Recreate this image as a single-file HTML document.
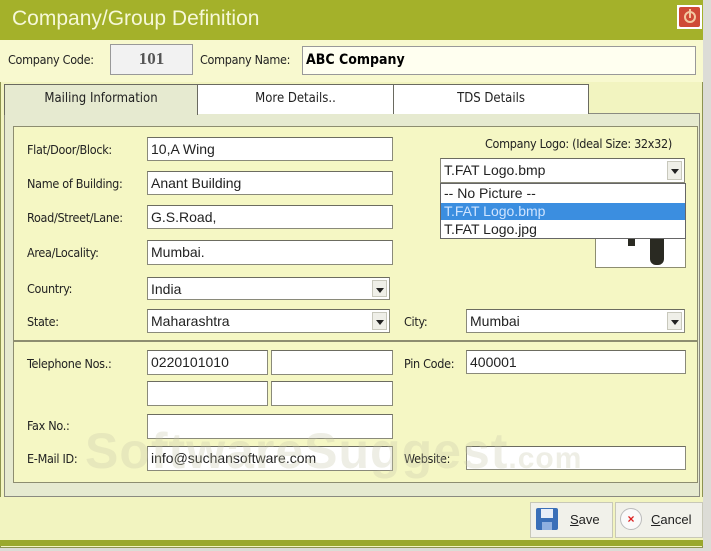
<!DOCTYPE html>
<html><head><meta charset="utf-8"><style>
*{box-sizing:border-box;margin:0;padding:0}
body{width:711px;height:551px;overflow:hidden;background:#dcdcd6;font-family:"Liberation Sans",sans-serif;position:relative}
.a{position:absolute}
.lbl{position:absolute;font-size:12.5px;color:#222;font-family:"DejaVu Sans Condensed","Liberation Sans",sans-serif;letter-spacing:-0.3px}
.in{position:absolute;background:#fff;border:1px solid #8a8a7a;border-top-color:#6c6c60;font-size:14px;color:#222;padding:3px 3px;font-family:"Liberation Sans",sans-serif;white-space:nowrap;overflow:hidden}
.cb .ar{position:absolute;right:2px;top:2px;width:15px;bottom:2px;background:#efefe8;border:1px solid #c8c8bc}
.cb .ar:after{content:"";position:absolute;left:3px;top:7px;border-left:4px solid transparent;border-right:4px solid transparent;border-top:5px solid #222}
.tab{position:absolute;top:84px;height:30px;border:1px solid #6a6a60;border-bottom:none;background:#fff;font-size:13px;text-align:center;line-height:28px;color:#222;font-family:"DejaVu Sans Condensed","Liberation Sans",sans-serif}
</style></head><body>
<div class="a" style="left:0;top:0;width:703px;height:548px;background:#f2f4c0;border:1px solid #8d9350"></div>
<div class="a" style="left:0;top:0;width:703px;height:40px;background:#a4b12a"></div>
<div class="a" style="left:12px;top:7px;font-size:21px;color:#f6f8d8">Company/Group Definition</div>
<div class="a" style="left:677px;top:5px;width:25px;height:24px;background:#fff"></div>
<div class="a" style="left:679px;top:7px;width:21px;height:20px;background:#cf4a36;border-radius:2px"></div>
<div class="a" style="left:684px;top:11px;width:12px;height:12px;border:2px solid #f3c8a0;border-radius:50%"></div>
<div class="a" style="left:689px;top:9px;width:2px;height:9px;background:#f3c8a0"></div>
<div class="a" style="left:0;top:40px;width:703px;height:42px;background:#f8f9cf"></div>
<div class="lbl" style="left:8px;top:52px">Company Code:</div>
<div class="a" style="left:110px;top:44px;width:83px;height:31px;background:#f2f2f2;border:1px solid #999;font-family:'Liberation Serif',serif;font-size:17px;font-weight:bold;color:#555;text-align:center;line-height:28px">101</div>
<div class="lbl" style="left:200px;top:52px">Company Name:</div>
<div class="a" style="left:302px;top:46px;width:394px;height:29px;background:#fffff0;border:1px solid #999;font-size:14px;font-weight:bold;padding:5px 3px;font-family:'DejaVu Sans Condensed',sans-serif">ABC Company</div>
<div class="a" style="left:4px;top:113px;width:696px;height:384px;background:#e6ead0;border:1px solid #8a8a80"></div>
<div class="tab" style="left:4px;width:194px;background:#e6ead0;height:31px">Mailing Information</div>
<div class="tab" style="left:197px;width:197px">More Details..</div>
<div class="tab" style="left:393px;width:196px">TDS Details</div>
<div class="a" style="left:13px;top:126px;width:685px;height:357px;background:#f5f7c4;border:1px solid #8d8d70"></div>
<div class="a" style="left:13px;top:340px;width:685px;height:2px;background:#8d8d70"></div>
<div class="lbl" style="left:27px;top:142px">Flat/Door/Block:</div>
<div class="in" style="left:147px;top:137px;width:246px;height:24px">10,A Wing</div>
<div class="lbl" style="left:27px;top:176px">Name of Building:</div>
<div class="in" style="left:147px;top:171px;width:246px;height:24px">Anant Building</div>
<div class="lbl" style="left:27px;top:210px">Road/Street/Lane:</div>
<div class="in" style="left:147px;top:205px;width:246px;height:24px">G.S.Road,</div>
<div class="lbl" style="left:27px;top:245px">Area/Locality:</div>
<div class="in" style="left:147px;top:240px;width:246px;height:25px">Mumbai.</div>
<div class="lbl" style="left:27px;top:281px">Country:</div>
<div class="in cb" style="left:147px;top:277px;width:243px;height:23px">India<div class="ar"></div></div>
<div class="lbl" style="left:27px;top:314px">State:</div>
<div class="in cb" style="left:147px;top:309px;width:243px;height:24px">Maharashtra<div class="ar"></div></div>
<div class="lbl" style="left:404px;top:314px">City:</div>
<div class="in cb" style="left:466px;top:309px;width:219px;height:24px">Mumbai<div class="ar"></div></div>
<div class="lbl" style="left:485px;top:136px">Company Logo: (Ideal Size: 32x32)</div>
<div class="a" style="left:595px;top:237px;width:91px;height:31px;background:#fff;border:1px solid #8d8d70"></div>
<div class="a" style="left:650px;top:238px;width:14px;height:27px;background:#2a2a22;border-radius:0 0 6px 6px"></div>
<div class="a" style="left:628px;top:238px;width:7px;height:8px;background:#2a2a22"></div>
<div class="in cb" style="left:440px;top:158px;width:245px;height:25px;font-family:'Liberation Sans',sans-serif;font-size:14px">T.FAT Logo.bmp<div class="ar"></div></div>
<div class="a" style="left:440px;top:183px;width:246px;height:56px;background:#fff;border:1px solid #666;font-size:14px;color:#222">
<div style="height:19px;line-height:19px;padding-left:3px">-- No Picture --</div>
<div style="height:17px;line-height:17px;padding-left:3px;background:#3b8ee0;color:#cfe4ff">T.FAT Logo.bmp</div>
<div style="height:18px;line-height:18px;padding-left:3px">T.FAT Logo.jpg</div></div>
<div class="lbl" style="left:27px;top:356px">Telephone Nos.:</div>
<div class="in" style="left:147px;top:350px;width:121px;height:25px">0220101010</div>
<div class="in" style="left:271px;top:350px;width:122px;height:25px"></div>
<div class="in" style="left:147px;top:381px;width:121px;height:25px"></div>
<div class="in" style="left:271px;top:381px;width:122px;height:25px"></div>
<div class="lbl" style="left:404px;top:356px">Pin Code:</div>
<div class="in" style="left:466px;top:350px;width:220px;height:24px">400001</div>
<div class="lbl" style="left:27px;top:418px">Fax No.:</div>
<div class="in" style="left:147px;top:414px;width:246px;height:25px"></div>
<div class="lbl" style="left:27px;top:451px">E-Mail ID:</div>
<div class="in" style="left:147px;top:446px;width:246px;height:25px">info@suchansoftware.com</div>
<div class="lbl" style="left:404px;top:451px">Website:</div>
<div class="in" style="left:466px;top:446px;width:220px;height:24px"></div>
<div class="a" style="left:85px;top:422px;font-size:50px;font-weight:bold;color:rgba(200,200,170,0.3);letter-spacing:1px">SoftwareSuggest<span style="font-size:30px">.com</span></div>
<div class="a" style="left:0;top:497px;width:703px;height:43px;background:#f2f4c0"></div>
<div class="a" style="left:0;top:540px;width:703px;height:6px;background:#9aa82c"></div>
<div class="a" style="left:530px;top:502px;width:83px;height:36px;background:#f1f1ea;border:1px solid #c8c8b8"></div>
<svg class="a" style="left:535px;top:507px" width="24" height="24"><rect x="1" y="1" width="22" height="22" rx="2" fill="#3a6fb8"/><rect x="6" y="2" width="12" height="9" fill="#e8eef8"/><rect x="7" y="15" width="10" height="8" fill="#8fb0e0"/></svg>
<div class="a" style="left:570px;top:512px;font-size:13px;color:#222"><u>S</u>ave</div>
<div class="a" style="left:615px;top:502px;width:88px;height:36px;background:#f1f1ea;border:1px solid #c8c8b8"></div>
<div class="a" style="left:620px;top:508px;width:22px;height:22px;border-radius:50%;background:#fafafa;border:1px solid #bbb;color:#d22;font-size:12px;font-weight:bold;text-align:center;line-height:20px">×</div>
<div class="a" style="left:651px;top:512px;font-size:13px;color:#222"><u>C</u>ancel</div>
</body></html>
